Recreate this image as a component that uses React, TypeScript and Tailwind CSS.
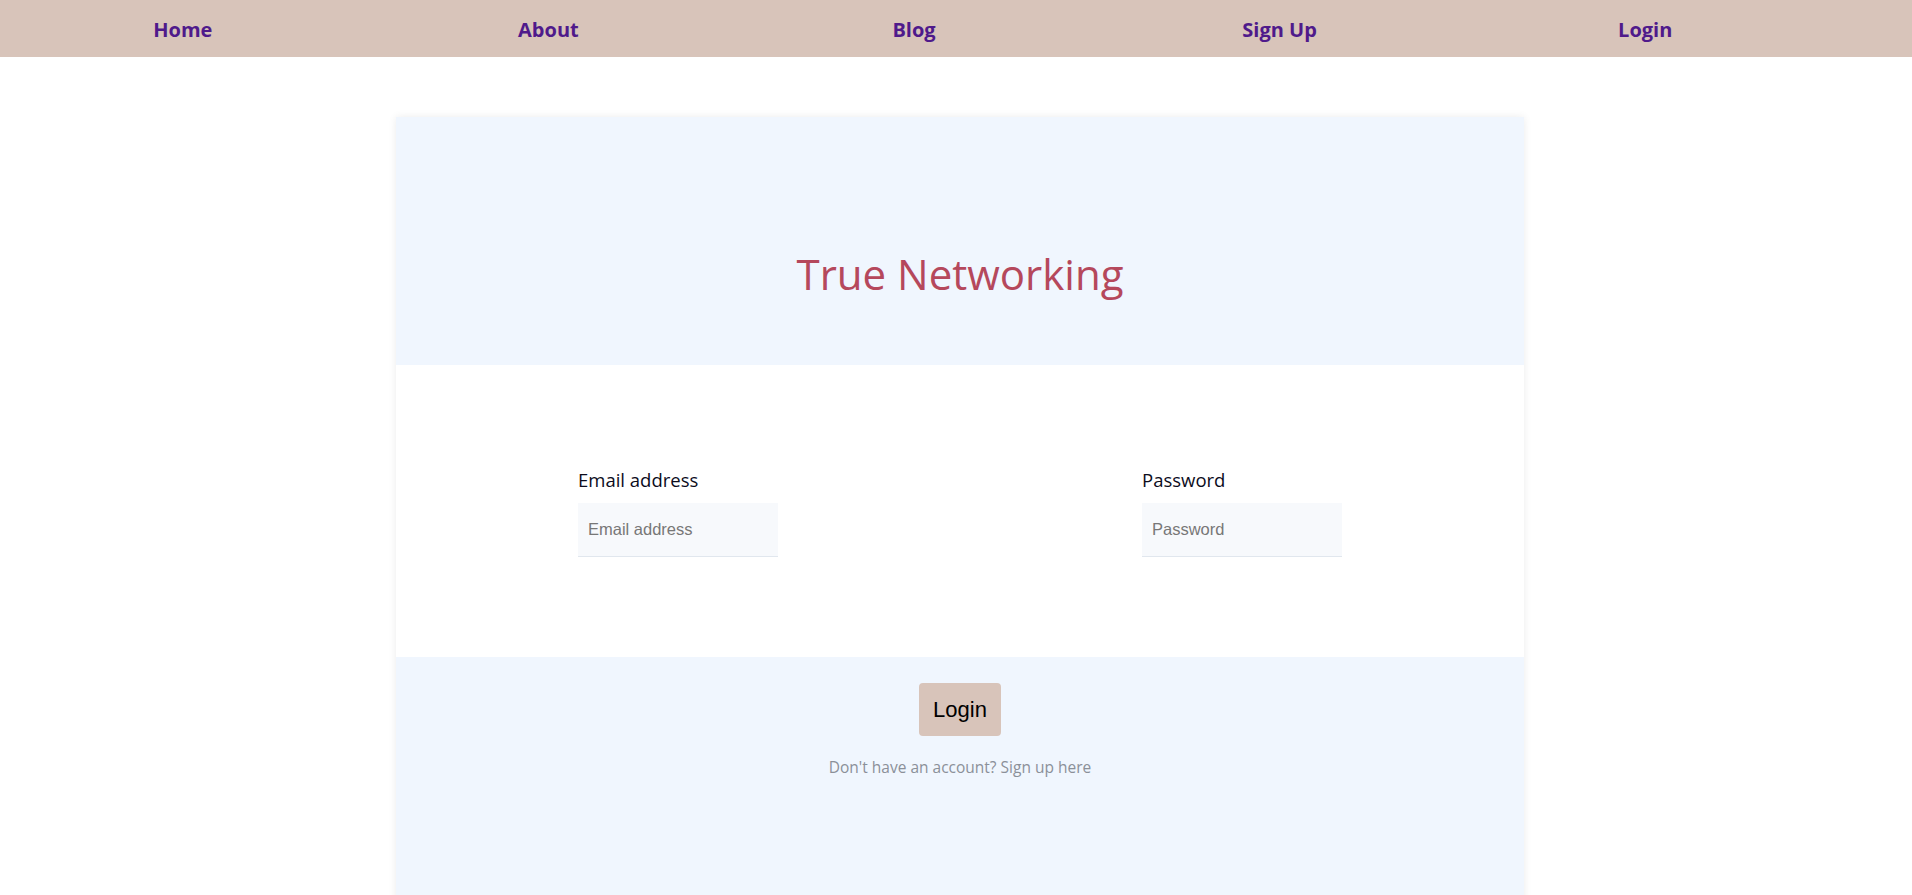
export default function App() {
  const links = ["Home", "About", "Blog", "Sign Up", "Login"];

  return (
    <div className="min-h-screen bg-white font-['Open_Sans',sans-serif]">
      {/* NAV */}
      <nav className="h-[57px] bg-[#d8c4ba]">
        <ul className="grid h-full w-[1828px] grid-cols-5 items-center pt-[2px]">
          {links.map((l) => (
            <li key={l} className="text-center">
              <a href="#" className="text-[20px] font-bold text-[#4f1a8b]">
                {l}
              </a>
            </li>
          ))}
        </ul>
      </nav>

      {/* CARD */}
      <main className="flex justify-center pl-[8px] pt-[60px]">
        <div className="w-[1128px] shadow-[0_0_8px_rgba(0,0,0,0.08)]">
          <div className="h-[248px] bg-[#f0f6fe] pt-[132px] text-center">
            <h1 className="text-[42px] leading-[1.2] text-[#b5485c]">True Networking</h1>
          </div>

          <form className="flex h-[292px] items-center justify-around bg-white">
            <div className="flex w-[200px] flex-col">
              <label className="mb-[10px] text-[18.5px] leading-[27px] text-[#0c0c1c]">Email address</label>
              <input
                type="email"
                placeholder="Email address"
                className="h-[54px] w-[200px] border-b border-[#e1e7ee] bg-[#f7f9fc] pl-[10px] font-['Liberation_Sans',Arial,sans-serif] text-[16.5px] outline-none placeholder:text-[#777]"
              />
            </div>
            <div className="flex w-[200px] flex-col">
              <label className="mb-[10px] text-[18.5px] leading-[27px] text-[#0c0c1c]">Password</label>
              <input
                type="password"
                placeholder="Password"
                className="h-[54px] w-[200px] border-b border-[#e1e7ee] bg-[#f7f9fc] pl-[10px] font-['Liberation_Sans',Arial,sans-serif] text-[16.5px] outline-none placeholder:text-[#777]"
              />
            </div>
          </form>

          <div className="flex h-[260px] flex-col items-center bg-[#f0f6fe] pt-[26px]">
            <button className="h-[53px] w-[82px] rounded-[4px] bg-[#d8c4ba] font-['Liberation_Sans',Arial,sans-serif] text-[22px] text-black">
              Login
            </button>
            <p className="mt-[20px] text-[15.5px] text-[#8b9099]">Don't have an account? Sign up here</p>
          </div>
        </div>
      </main>
    </div>
  );
}
